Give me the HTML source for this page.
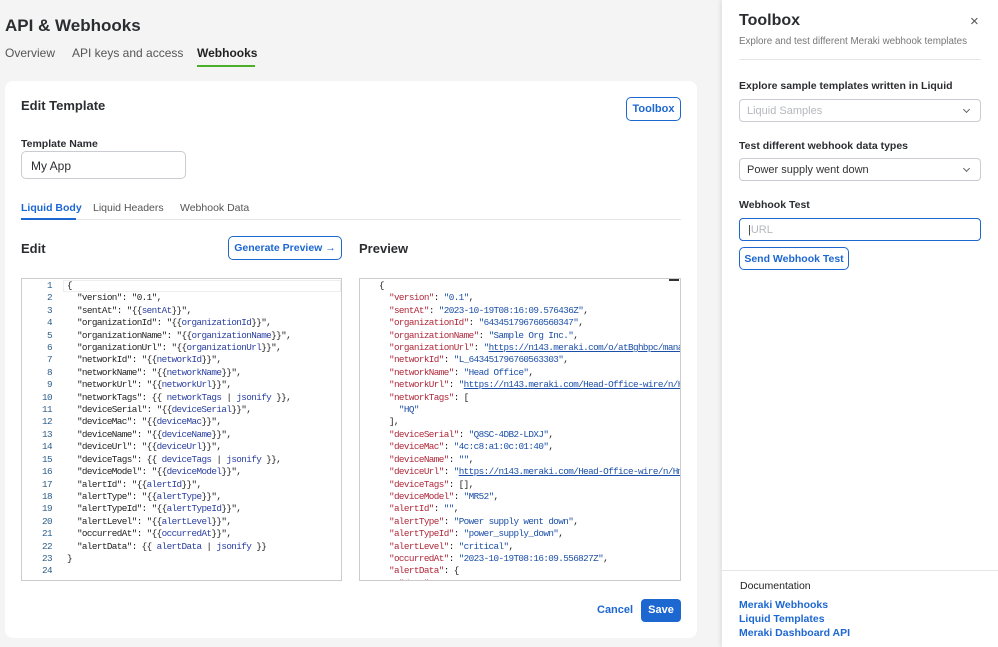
<!DOCTYPE html>
<html><head><meta charset="utf-8"><style>
*{box-sizing:border-box;margin:0;padding:0}
body{width:998px;height:647px;overflow:hidden;background:#f4f4f4;font-family:"Liberation Sans",sans-serif;color:#2b2d31;position:relative}
.a{position:absolute;white-space:nowrap}
.code{position:absolute;font-family:"Liberation Mono",monospace;font-size:9.3px;letter-spacing:-0.6px;line-height:12.4px;white-space:pre;color:#222}
.v{color:#2a3fa0}
.k{color:#b0283a}
.s{color:#1b4fa8}
.u{color:#1b4fa8;text-decoration:underline}
.btn{position:absolute;border:1.5px solid #1d67d1;border-radius:5px;color:#1d67d1;font-weight:bold;font-size:11px;display:flex;align-items:center;justify-content:center;background:#fff;white-space:nowrap}
.sel{position:absolute;border:1px solid #c9ccd0;border-radius:4px;background:#fff;font-size:11px;padding-left:7px;display:flex;align-items:center;white-space:nowrap}
.sel.dd:after{content:"";position:absolute;right:11px;top:7px;width:4px;height:4px;border-right:1px solid #666;border-bottom:1px solid #666;transform:rotate(45deg)}
.lnk{color:#1d67d1;font-weight:bold;font-size:11px}
</style></head><body>
<div class="a" style="left:5px;top:16px;font-size:17px;font-weight:bold;color:#2b2d31">API &amp; Webhooks</div>
<div class="a" style="left:5px;top:46px;font-size:12px;color:#555">Overview</div>
<div class="a" style="left:72px;top:46px;font-size:12px;color:#555">API keys and access</div>
<div class="a" style="left:197px;top:46px;font-size:12px;font-weight:bold;color:#222">Webhooks</div>
<div class="a" style="left:197px;top:65px;width:58px;height:2px;background:#4caf2a"></div>

<div class="a" style="left:5px;top:81px;width:692px;height:557px;background:#fff;border-radius:8px"></div>
<div class="a" style="left:21px;top:98px;font-size:13px;font-weight:bold">Edit Template</div>
<div class="btn" style="left:626px;top:97px;width:55px;height:24px">Toolbox</div>
<div class="a" style="left:21px;top:138px;font-size:10.5px;font-weight:bold">Template Name</div>
<div class="a" style="left:21px;top:151px;width:165px;height:28px;border:1px solid #c9ccd0;border-radius:5px;font-size:12px;padding:7px 9px">My App</div>
<div class="a" style="left:21px;top:202px;font-size:10.5px;font-weight:bold;color:#1d67d1">Liquid Body</div>
<div class="a" style="left:93px;top:202px;font-size:10.5px;color:#555">Liquid Headers</div>
<div class="a" style="left:180px;top:202px;font-size:10.5px;color:#555">Webhook Data</div>
<div class="a" style="left:21px;top:219px;width:660px;height:1px;background:#e4e5e7"></div>
<div class="a" style="left:21px;top:218px;width:55px;height:2px;background:#1d67d1"></div>
<div class="a" style="left:21px;top:241px;font-size:13px;font-weight:bold">Edit</div>
<div class="btn" style="left:228px;top:236px;width:114px;height:24px;font-size:10.5px">Generate Preview →</div>
<div class="a" style="left:359px;top:241px;font-size:13px;font-weight:bold">Preview</div>

<div class="a" style="left:21px;top:278px;width:321px;height:303px;border:1px solid #ccc;background:#fff;overflow:hidden">
<div class="a" style="left:41px;top:1px;width:278px;height:12px;border:1px solid #eee"></div>
<div class="code" style="left:0;top:1px;width:30px;text-align:right;color:#2a5c8a">1
2
3
4
5
6
7
8
9
10
11
12
13
14
15
16
17
18
19
20
21
22
23
24</div>
<div class="code" style="left:45px;top:1px">{
  "version": "0.1",
  "sentAt": "{{<span class="v">sentAt</span>}}",
  "organizationId": "{{<span class="v">organizationId</span>}}",
  "organizationName": "{{<span class="v">organizationName</span>}}",
  "organizationUrl": "{{<span class="v">organizationUrl</span>}}",
  "networkId": "{{<span class="v">networkId</span>}}",
  "networkName": "{{<span class="v">networkName</span>}}",
  "networkUrl": "{{<span class="v">networkUrl</span>}}",
  "networkTags": {{ <span class="v">networkTags</span> | <span class="v">jsonify</span> }},
  "deviceSerial": "{{<span class="v">deviceSerial</span>}}",
  "deviceMac": "{{<span class="v">deviceMac</span>}}",
  "deviceName": "{{<span class="v">deviceName</span>}}",
  "deviceUrl": "{{<span class="v">deviceUrl</span>}}",
  "deviceTags": {{ <span class="v">deviceTags</span> | <span class="v">jsonify</span> }},
  "deviceModel": "{{<span class="v">deviceModel</span>}}",
  "alertId": "{{<span class="v">alertId</span>}}",
  "alertType": "{{<span class="v">alertType</span>}}",
  "alertTypeId": "{{<span class="v">alertTypeId</span>}}",
  "alertLevel": "{{<span class="v">alertLevel</span>}}",
  "occurredAt": "{{<span class="v">occurredAt</span>}}",
  "alertData": {{ <span class="v">alertData</span> | <span class="v">jsonify</span> }}
}
</div></div>

<div class="a" style="left:359px;top:278px;width:322px;height:303px;border:1px solid #ccc;background:#fff;overflow:hidden">
<div class="a" style="left:309px;top:0;width:10px;height:2px;background:#333"></div>
<div class="code" style="left:19px;top:1px">{
  <span class="k">"version"</span>: <span class="s">"0.1"</span>,
  <span class="k">"sentAt"</span>: <span class="s">"2023-10-19T08:16:09.576436Z"</span>,
  <span class="k">"organizationId"</span>: <span class="s">"643451796760560347"</span>,
  <span class="k">"organizationName"</span>: <span class="s">"Sample Org Inc."</span>,
  <span class="k">"organizationUrl"</span>: <span class="s">"</span><span class="u">https://n143.meraki.com/o/atBghbpc/manage</span>
  <span class="k">"networkId"</span>: <span class="s">"L_643451796760563303"</span>,
  <span class="k">"networkName"</span>: <span class="s">"Head Office"</span>,
  <span class="k">"networkUrl"</span>: <span class="s">"</span><span class="u">https://n143.meraki.com/Head-Office-wire/n/H</span>
  <span class="k">"networkTags"</span>: [
    <span class="s">"HQ"</span>
  ],
  <span class="k">"deviceSerial"</span>: <span class="s">"Q8SC-4DB2-LDXJ"</span>,
  <span class="k">"deviceMac"</span>: <span class="s">"4c:c8:a1:0c:01:40"</span>,
  <span class="k">"deviceName"</span>: <span class="s">""</span>,
  <span class="k">"deviceUrl"</span>: <span class="s">"</span><span class="u">https://n143.meraki.com/Head-Office-wire/n/Hm</span>
  <span class="k">"deviceTags"</span>: [],
  <span class="k">"deviceModel"</span>: <span class="s">"MR52"</span>,
  <span class="k">"alertId"</span>: <span class="s">""</span>,
  <span class="k">"alertType"</span>: <span class="s">"Power supply went down"</span>,
  <span class="k">"alertTypeId"</span>: <span class="s">"power_supply_down"</span>,
  <span class="k">"alertLevel"</span>: <span class="s">"critical"</span>,
  <span class="k">"occurredAt"</span>: <span class="s">"2023-10-19T08:16:09.556827Z"</span>,
  <span class="k">"alertData"</span>: {
    <span class="k">"data"</span>: </div></div>

<div class="a lnk" style="left:597px;top:604px;font-size:11px">Cancel</div>
<div class="a" style="left:641px;top:599px;width:40px;height:23px;background:#1d67d1;border-radius:4px;color:#fff;font-weight:bold;font-size:11px;text-align:center;line-height:23px">Save</div>

<div class="a" style="left:722px;top:0;width:276px;height:647px;background:#fff;box-shadow:-2px 0 4px rgba(0,0,0,.08)"></div>
<div class="a" style="left:739px;top:12px;font-size:16px;font-weight:bold">Toolbox</div>
<div class="a" style="left:970px;top:13px;font-size:15px;color:#555">×</div>
<div class="a" style="left:739px;top:36px;font-size:9.8px;color:#777">Explore and test different Meraki webhook templates</div>
<div class="a" style="left:739px;top:59px;width:242px;height:1px;background:#e6e6e6"></div>
<div class="a" style="left:739px;top:80px;font-size:10.5px;font-weight:bold">Explore sample templates written in Liquid</div>
<div class="sel dd" style="left:739px;top:99px;width:242px;height:23px;color:#b5b8bc">Liquid Samples</div>
<div class="a" style="left:739px;top:140px;font-size:10.5px;font-weight:bold">Test different webhook data types</div>
<div class="sel dd" style="left:739px;top:158px;width:242px;height:23px;color:#333">Power supply went down</div>
<div class="a" style="left:739px;top:199px;font-size:10.5px;font-weight:bold">Webhook Test</div>
<div class="sel" style="left:739px;top:218px;width:242px;height:23px;border:1.5px solid #1d67d1;color:#b5b8bc;padding-left:8px"><span style="color:#333">|</span>URL</div>
<div class="btn" style="left:739px;top:247px;width:110px;height:23px;font-size:10.5px">Send Webhook Test</div>
<div class="a" style="left:722px;top:570px;width:276px;height:1px;background:#e6e6e6"></div>
<div class="a" style="left:740px;top:580px;font-size:10.5px;color:#222">Documentation</div>
<div class="a lnk" style="left:739px;top:599px;font-size:10.5px">Meraki Webhooks</div>
<div class="a lnk" style="left:739px;top:613px;font-size:10.5px">Liquid Templates</div>
<div class="a lnk" style="left:739px;top:627px;font-size:10.5px">Meraki Dashboard API</div>
</body></html>
